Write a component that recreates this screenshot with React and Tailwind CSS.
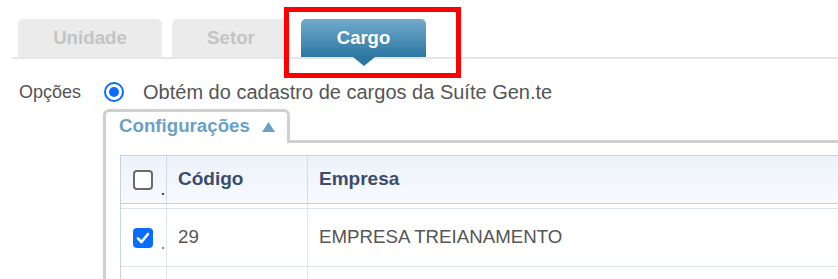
export default function App() {
  return (
    <div className="relative w-[838px] h-[279px] overflow-hidden bg-white font-['Liberation_Sans',Arial,sans-serif]">
      {/* tabs */}
      <div className="ml-3 pt-[19px] border-b-2 border-[#e6e6e6]">
        <div className="flex ml-[6px] h-[38px]">
          <div className="w-[144px] rounded-t-[5px] bg-[#ebebeb] flex items-center justify-center text-[18.7px] font-bold text-[#c4c4c4]">
            Unidade
          </div>
          <div className="ml-[10px] w-[118px] rounded-t-[5px] bg-[#ebebeb] flex items-center justify-center text-[18.7px] font-bold text-[#c4c4c4]">
            Setor
          </div>
          <div className="relative ml-[11px] w-[125px] rounded-t-[5px] bg-gradient-to-b from-[#72abcc] to-[#2a77a1] flex items-center justify-center text-[18.5px] font-bold text-white">
            Cargo
            <div className="absolute left-1/2 -translate-x-1/2 top-full w-0 h-0 border-l-[11px] border-r-[11px] border-t-[9px] border-l-transparent border-r-transparent border-t-[#2a77a1]" />
          </div>
        </div>
      </div>

      {/* annotation */}
      <div className="absolute left-[284px] top-[7px] w-[177px] h-[71px] border-[5px] border-[#ff0000]" />

      {/* opções */}
      <div className="flex items-center mt-[23px] h-[20px] pl-[19px] text-[#555]">
        <span className="text-[18px]">Opções</span>
        <span className="ml-[23px] w-[20px] h-[20px] rounded-full border-2 border-[#0a6cff] flex items-center justify-center">
          <span className="w-[10px] h-[10px] rounded-full bg-[#0a6cff]" />
        </span>
        <span className="ml-[19px] text-[20px]">Obtém do cadastro de cargos da Suíte Gen.te</span>
      </div>

      {/* configurações panel */}
      <div className="ml-[103px] mt-[7px]">
        <div className="flex">
          <div className="h-[34px] w-[187px] border-t-[3px] border-l-[3px] border-r-[3px] border-[#cfcfcf] rounded-t-[6px] flex items-center pl-[13px] pb-[2px] text-[18.7px] font-bold text-[#6b9fc9]">
            Configurações
            <svg className="ml-[12px]" width="13" height="10" viewBox="0 0 13 10">
              <path d="M6.5 0 L13 10 L0 10 Z" fill="#6b9fc9" />
            </svg>
          </div>
          <div className="flex-1 h-[34px] border-b-[3px] border-[#cfcfcf]" />
        </div>
        <div className="border-l-[3px] border-[#cfcfcf] pl-[14px] pt-[12px] h-[200px]">
          <div className="border-l border-t border-[#c7d1e0]">
            {/* header */}
            <div className="flex h-[48px] border-b border-[#c5cfde] bg-gradient-to-b from-[#edf2fb] to-[#f8fafd] text-[19px] font-bold text-[#3b4d6b]">
              <div className="relative w-[46px] flex items-center pl-[12px] border-r border-[#d3dbe8]">
                <span className="w-[20px] h-[20px] rounded-[4px] border-2 border-[#6b6b6b] bg-white" />
                <span className="absolute right-[2px] bottom-[8px] w-[2px] h-[2px] bg-[#444]" />
              </div>
              <div className="w-[141px] flex items-center pl-[11px] border-r border-[#d3dbe8]">Código</div>
              <div className="flex-1 flex items-center pl-[11px]">Empresa</div>
            </div>
            <div className="h-[4px] bg-white flex">
              <div className="w-[46px] border-r border-[#dfe5ee]" />
              <div className="w-[141px] border-r border-[#dfe5ee]" />
            </div>
            {/* row */}
            <div className="flex h-[59px] border-t border-b border-[#dde4ee] text-[18.7px] text-[#555]">
              <div className="relative w-[46px] flex items-center pl-[12px] border-r border-[#dfe5ee]">
                <span className="w-[20px] h-[20px] rounded-[4px] bg-[#0a6cff] flex items-center justify-center">
                  <svg width="14" height="12" viewBox="0 0 14 12">
                    <path d="M2 6.5 L5.5 10 L12 2" fill="none" stroke="white" strokeWidth="2.6" strokeLinecap="round" strokeLinejoin="round" />
                  </svg>
                </span>
                <span className="absolute right-[2px] bottom-[17px] w-[2px] h-[2px] bg-[#888]" />
              </div>
              <div className="w-[141px] flex items-center pl-[11px] border-r border-[#dfe5ee]">29</div>
              <div className="flex-1 flex items-center pl-[11px]">EMPRESA TREIANAMENTO</div>
            </div>
            <div className="flex h-[40px]">
              <div className="w-[46px] border-r border-[#dfe5ee]" />
              <div className="w-[141px] border-r border-[#dfe5ee]" />
            </div>
          </div>
        </div>
      </div>
    </div>
  )
}
